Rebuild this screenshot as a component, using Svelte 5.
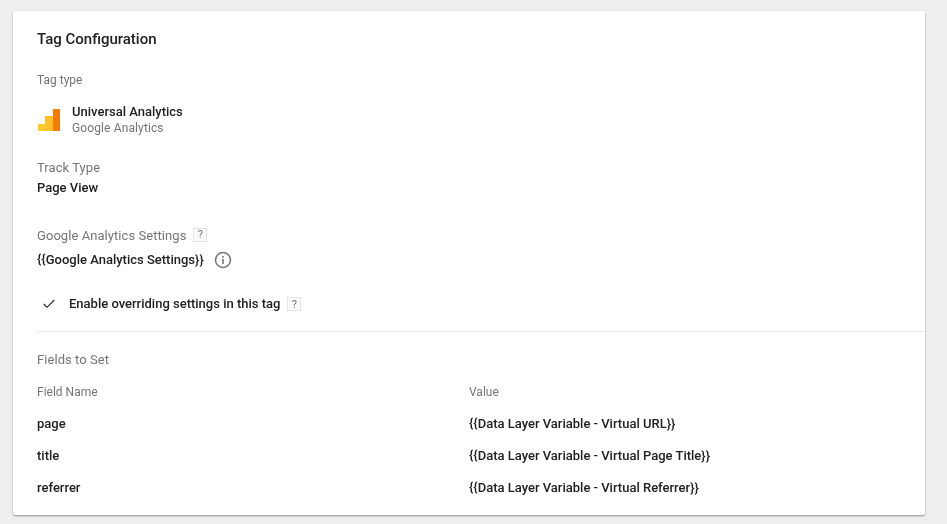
<script>
  const rows = [
    { name: 'page', value: '{{Data Layer Variable - Virtual URL}}' },
    { name: 'title', value: '{{Data Layer Variable - Virtual Page Title}}' },
    { name: 'referrer', value: '{{Data Layer Variable - Virtual Referrer}}' }
  ];
</script>

<div class="page">
  <section class="card">
    <h2 class="title">Tag Configuration</h2>

    <div class="label tagtype">Tag type</div>
    <div class="type">
      <svg class="logo" width="24" height="24" viewBox="0 0 24 24" aria-hidden="true">
        <rect x="1" y="16" width="7" height="7" fill="#ffca2f" />
        <rect x="8" y="8" width="8" height="15" fill="#fec12d" />
        <rect x="16" y="1" width="7" height="22" fill="#f57c00" />
      </svg>
      <div>
        <div class="value medium">Universal Analytics</div>
        <div class="sub">Google Analytics</div>
      </div>
    </div>

    <div class="label track">Track Type</div>
    <div class="value medium trackval">Page View</div>

    <div class="label gas">Google Analytics Settings <span class="help up">?</span></div>
    <div class="value medium gasval">
      <span>{'{{'}Google Analytics Settings{'}}'}</span>
      <svg class="info" width="18" height="18" viewBox="0 0 18 18" aria-hidden="true">
        <circle cx="9" cy="9" r="7.5" fill="none" stroke="#757575" stroke-width="1.5" />
        <rect x="8.2" y="8" width="1.6" height="5" fill="#757575" />
        <rect x="8.2" y="5" width="1.6" height="1.7" fill="#757575" />
      </svg>
    </div>

    <div class="override">
      <svg class="check" width="12" height="10" viewBox="0 0 12 10" aria-hidden="true">
        <path d="M0.7 5 L4 8.3 L11.3 1" fill="none" stroke="#212121" stroke-width="1.1" />
      </svg>
      <span class="value medium">Enable overriding settings in this tag</span>
      <span class="help">?</span>
    </div>

    <hr class="rule" />

    <div class="label fields">Fields to Set</div>
    <div class="grid">
      <div class="head">Field Name</div>
      <div class="head">Value</div>
      {#each rows as row}
        <div class="value medium cell">{row.name}</div>
        <div class="value medium cell">{row.value}</div>
      {/each}
    </div>
  </section>
</div>

<style>
  :global(body) {
    margin: 0;
    background: #eeeeee;
  }
  .page {
    width: 947px;
    height: 524px;
    box-sizing: border-box;
    padding: 11px 22px 9px 13px;
    overflow: hidden;
    background: #eeeeee;
    font-family: Roboto, "Liberation Sans", sans-serif;
  }
  .card {
    height: 504px;
    box-sizing: border-box;
    padding: 18px 0 0 24px;
    background: #fff;
    border-radius: 2px;
    box-shadow: 0 1px 2px rgba(0, 0, 0, 0.4);
    filter: blur(0.35px);
  }
  .title {
    margin: 0;
    font-size: 15px;
    line-height: 20px;
    font-weight: 500;
    color: #212121;
  }
  .label {
    font-size: 13px;
    line-height: 18px;
    letter-spacing: 0.06px;
    color: #757575;
  }
  .tagtype { margin-top: 22px; font-size: 12px; letter-spacing: 0; }
  .value { font-size: 13px; line-height: 16px; color: #212121; }
  .medium { font-weight: 500; }
  .type {
    display: flex;
    align-items: center;
    gap: 11px;
    margin-top: 15px;
  }
  .logo { flex: none; }
  .sub { font-size: 12px; line-height: 16px; letter-spacing: 0.12px; color: #757575; }
  .track { margin-top: 23px; }
  .trackval { margin-top: 3px; }
  .gas { margin-top: 31px; display: flex; align-items: center; gap: 7px; }
  .gasval { margin-top: 6px; display: flex; align-items: center; gap: 10px; height: 18px; }
  .help {
    display: inline-flex;
    align-items: center;
    justify-content: center;
    width: 12px;
    height: 12px;
    border: 1px solid #e4e4e4;
    background: #fafafa;
    font-size: 11px;
    line-height: 1;
    font-weight: 400;
    color: #757575;
  }
  .up { margin-bottom: 3px; }
  .override {
    display: flex;
    align-items: center;
    margin-top: 26px;
    padding-left: 6px;
    height: 18px;
  }
  .check { margin-right: 14px; }
  .override .help { margin-left: 7px; }
  .rule {
    margin: 18px 0 0 0;
    border: 0;
    border-top: 1px solid #e6e6e6;
  }
  .fields { margin-top: 19px; }
  .grid {
    display: grid;
    grid-template-columns: 432px 1fr;
    margin-top: 15px;
  }
  .head { font-size: 12px; line-height: 16px; color: #757575; }
  .cell { margin-top: 16px; }
</style>
